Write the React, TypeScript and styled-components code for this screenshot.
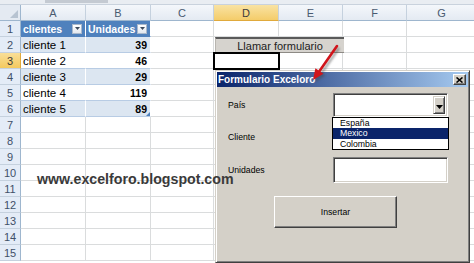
import styled, { createGlobalStyle } from "styled-components";

const GlobalStyle = createGlobalStyle`
  html, body {
    margin: 0;
    padding: 0;
    background: #ffffff;
  }
  body {
    font-family: "Liberation Sans", Arial, sans-serif;
  }
`;

const COLUMNS = ["A", "B", "C", "D", "E", "F", "G"];
const ROW_COUNT = 15;

const clients = [
  { name: "cliente 1", units: 39 },
  { name: "cliente 2", units: 46 },
  { name: "cliente 3", units: 29 },
  { name: "cliente 4", units: 119 },
  { name: "cliente 5", units: 89 },
];

const countries = ["España", "Mexico", "Colombia"];

const SELECTED_ROW = 3;
const SELECTED_COL = 3;

const FilterArrow = () => (
  <FilterButton>
    <svg width="5" height="3" viewBox="0 0 5 3">
      <path d="M0 0 H5 L2.5 3 Z" fill="#3c4a5c" />
    </svg>
  </FilterButton>
);

const DownArrow = () => (
  <svg width="7" height="4" viewBox="0 0 7 4">
    <path d="M0 0 H7 L3.5 4 Z" fill="#000" />
  </svg>
);

const App = () => {
  const renderCell = (row: number, col: number) => {
    const selected = row === SELECTED_ROW && col === SELECTED_COL;
    if (row === 1 && col < 2) {
      return (
        <Cell key={col} $tone="head">
          <HeadLabel>{col === 0 ? "clientes" : "Unidades"}</HeadLabel>
          <FilterArrow />
        </Cell>
      );
    }
    if (row >= 2 && row <= 6 && col < 2) {
      const item = clients[row - 2];
      const tone = row % 2 === 0 ? "band" : "row";
      return col === 0 ? (
        <Cell key={col} $tone={tone}>
          {item.name}
        </Cell>
      ) : (
        <Cell key={col} $tone={tone} $numeric $handle={row === 6}>
          {item.units}
        </Cell>
      );
    }
    return <Cell key={col} $selected={selected} />;
  };

  return (
    <>
      <GlobalStyle />
      <Screen>
        <TopStrip>
          <StripTab />
        </TopStrip>
        <Sheet>
          <Corner />
          {COLUMNS.map((c, i) => (
            <ColHead key={c} $active={i === SELECTED_COL}>
              {c}
            </ColHead>
          ))}
          {Array.from({ length: ROW_COUNT }, (_, r) => {
            const row = r + 1;
            return [
              <RowHead key={`h${row}`} $active={row === SELECTED_ROW}>
                {row}
              </RowHead>,
              ...COLUMNS.map((_, col) => (
                <RowCellSlot key={`${row}-${col}`}>{renderCell(row, col)}</RowCellSlot>
              )),
            ];
          })}
        </Sheet>

        <SheetButton>Llamar formulario</SheetButton>

        <Dialog>
          <TitleBar>
            <TitleText>Formulario Exceloro</TitleText>
            <CloseButton>
              <svg width="7" height="6" viewBox="0 0 7 6">
                <path d="M0.5 0.5 L6.5 5.5 M6.5 0.5 L0.5 5.5" stroke="#000" strokeWidth="1.6" />
              </svg>
            </CloseButton>
          </TitleBar>
          <FormBody>
            <FieldGrid>
              <FieldLabel>País</FieldLabel>
              <Combo>
                <ComboText />
                <DropButton>
                  <DownArrow />
                </DropButton>
                <DropList>
                  {countries.map((c) => (
                    <ListItem key={c} $active={c === "Mexico"}>
                      {c}
                    </ListItem>
                  ))}
                </DropList>
              </Combo>
              <FieldLabel>Cliente</FieldLabel>
              <Combo>
                <ComboText />
              </Combo>
              <FieldLabel>Unidades</FieldLabel>
              <TextBox />
            </FieldGrid>
            <ActionButton>Insertar</ActionButton>
          </FormBody>
        </Dialog>

        <Watermark>www.excelforo.blogspot.com</Watermark>

        <Pointer width="50" height="50" viewBox="0 0 50 50">
          <defs>
            <filter id="soft" x="-20%" y="-20%" width="140%" height="140%">
              <feGaussianBlur stdDeviation="1" />
            </filter>
          </defs>
          <g transform="translate(2 2)" filter="url(#soft)" opacity="0.45">
            <line x1="37" y1="6" x2="19.5" y2="31" stroke="#444" strokeWidth="2.6" />
            <polygon points="13,40 23.4,33.8 15.4,28.2" fill="#444" />
          </g>
          <line x1="37" y1="6" x2="19.5" y2="31" stroke="#d0141b" strokeWidth="2.6" strokeLinecap="round" />
          <polygon points="13,40 23.4,33.8 15.4,28.2" fill="#d0141b" />
        </Pointer>
      </Screen>
    </>
  );
};

const Screen = styled.div`
  position: relative;
  width: 474px;
  height: 263px;
  overflow: hidden;
  background: #ffffff;
`;

const TopStrip = styled.div`
  height: 5px;
  background: #e9edf2;
  border-bottom: 1px solid #c9d2dd;
  box-sizing: border-box;
  padding-left: 45px;
`;

const StripTab = styled.div`
  width: 63px;
  height: 3px;
  background: #c4cad2;
`;

const Sheet = styled.div`
  display: grid;
  grid-template-columns: 21px 65px 65px 63px 65px 64px 64px 70px;
  grid-template-rows: 16px;
  grid-auto-rows: 16px;
  font-size: 11.5px;
  color: #000;
`;

const RowCellSlot = styled.div`
  display: contents;
`;

const Corner = styled.div`
  position: relative;
  background: #e4eaf2;
  border-right: 1px solid #9eb6ce;
  border-bottom: 1px solid #9eb6ce;
  box-sizing: border-box;
  &::after {
    content: "";
    position: absolute;
    right: 2px;
    bottom: 2px;
    border-left: 8px solid transparent;
    border-bottom: 8px solid #b7c3d1;
  }
`;

const ColHead = styled.div<{ $active?: boolean }>`
  display: flex;
  align-items: center;
  justify-content: center;
  box-sizing: border-box;
  font-size: 11px;
  color: ${(p) => (p.$active ? "#3b3b3b" : "#4a5a70")};
  background: ${(p) =>
    p.$active
      ? "linear-gradient(#f9e3a3, #f4cc6a)"
      : "linear-gradient(#f4f7fb, #e4eaf2)"};
  border-right: 1px solid #c5d1de;
  border-bottom: 1px solid ${(p) => (p.$active ? "#e0a93b" : "#9eb6ce")};
`;

const RowHead = styled.div<{ $active?: boolean }>`
  display: flex;
  align-items: center;
  justify-content: center;
  box-sizing: border-box;
  font-size: 11px;
  color: ${(p) => (p.$active ? "#3b3b3b" : "#3f5068")};
  background: ${(p) => (p.$active ? "linear-gradient(#f9df98, #f4c95f)" : "#e4ecf7")};
  border-right: 1px solid ${(p) => (p.$active ? "#e0a93b" : "#9eb6ce")};
  border-bottom: 1px solid #c5d1de;
`;

const Cell = styled.div<{
  $tone?: "head" | "band" | "row";
  $numeric?: boolean;
  $selected?: boolean;
  $handle?: boolean;
}>`
  position: relative;
  display: flex;
  align-items: center;
  justify-content: ${(p) => (p.$numeric ? "flex-end" : "space-between")};
  box-sizing: border-box;
  padding: 0 3px 0 2px;
  white-space: nowrap;
  overflow: visible;
  font-weight: ${(p) => (p.$numeric ? 700 : 400)};
  font-size: ${(p) => (p.$numeric ? "10.5px" : "11.5px")};
  background: ${(p) =>
    p.$tone === "head" ? "#4f81bd" : p.$tone === "band" ? "#dce6f1" : "#ffffff"};
  border-right: 1px solid ${(p) => (p.$tone ? "#ffffff" : "#dadcdd")};
  border-bottom: 1px solid
    ${(p) => (p.$tone === "head" ? "#4f81bd" : p.$tone ? "#b8cce4" : "#dadcdd")};
  ${(p) =>
    p.$selected &&
    `
    z-index: 1;
    outline: 2px solid #000;
    outline-offset: -1px;
  `}
  ${(p) =>
    p.$handle &&
    `
    &::after {
      content: "";
      position: absolute;
      right: 0;
      bottom: 0;
      border-left: 4px solid transparent;
      border-bottom: 4px solid #4f81bd;
    }
  `}
`;

const HeadLabel = styled.span`
  color: #ffffff;
  font-weight: 700;
  font-size: 10.5px;
`;

const FilterButton = styled.span`
  display: flex;
  align-items: center;
  justify-content: center;
  width: 10px;
  height: 10px;
  box-sizing: border-box;
  background: linear-gradient(#ffffff, #e3e8ef);
  border: 1px solid #a9b8cb;
  margin-left: 2px;
`;

const SheetButton = styled.div`
  position: absolute;
  left: 215px;
  top: 37px;
  width: 129px;
  height: 16px;
  box-sizing: border-box;
  display: flex;
  align-items: center;
  justify-content: center;
  background: #d6d3ce;
  border-top: 2px solid #5a5a5a;
  border-left: 1px solid #b8b5af;
  border-bottom: 1px solid #8d8a85;
  font-size: 11px;
  color: #222;
`;

const Watermark = styled.div`
  position: absolute;
  left: 37px;
  top: 171px;
  font-size: 14.2px;
  line-height: 16px;
  font-weight: 700;
  color: #3a3a3a;
  white-space: nowrap;
`;

const Dialog = styled.div`
  position: absolute;
  left: 215px;
  top: 70px;
  width: 255px;
  height: 193px;
  box-sizing: border-box;
  display: flex;
  flex-direction: column;
  padding: 1px;
  background: #d4d0c8;
  border: 1px solid;
  border-color: #d4d0c8 #404040 #404040 #d4d0c8;
  box-shadow: inset 1px 1px #ffffff, inset -1px -1px #808080;
  font-size: 8.7px;
  color: #000;
`;

const TitleBar = styled.div`
  height: 15px;
  display: flex;
  align-items: center;
  justify-content: space-between;
  padding: 0 2px 0 1px;
  background: linear-gradient(to right, #0a246a, #a6caf0);
`;

const TitleText = styled.span`
  color: #ffffff;
  font-weight: 700;
  font-size: 10px;
  white-space: nowrap;
`;

const CloseButton = styled.span`
  display: flex;
  align-items: center;
  justify-content: center;
  width: 13px;
  height: 11px;
  box-sizing: border-box;
  background: #d4d0c8;
  border: 1px solid;
  border-color: #ffffff #404040 #404040 #ffffff;
  box-shadow: inset -1px -1px #808080;
`;

const FormBody = styled.div`
  flex: 1;
  display: flex;
  flex-direction: column;
  padding: 6px 0 0 11px;
`;

const FieldGrid = styled.div`
  display: grid;
  grid-template-columns: 105px 115px;
  grid-template-rows: 24px 24px 26px;
  row-gap: 8px;
`;

const FieldLabel = styled.span`
  align-self: center;
`;

const sunken = `
  box-sizing: border-box;
  background: #ffffff;
  border: 1px solid;
  border-color: #808080 #ffffff #ffffff #808080;
  box-shadow: inset 1px 1px #404040, inset -1px -1px #d4d0c8;
`;

const Combo = styled.div`
  position: relative;
  display: flex;
  align-items: stretch;
  padding: 2px;
  ${sunken}
`;

const ComboText = styled.div`
  flex: 1;
`;

const DropButton = styled.div`
  width: 12px;
  display: flex;
  align-items: flex-end;
  justify-content: center;
  padding-bottom: 4px;
  box-sizing: border-box;
  background: #d4d0c8;
  border: 1px solid;
  border-color: #d4d0c8 #404040 #404040 #d4d0c8;
  box-shadow: inset 1px 1px #ffffff, inset -1px -1px #808080;
`;

const DropList = styled.div`
  position: absolute;
  z-index: 2;
  left: -2px;
  right: -2px;
  top: calc(100% + 1px);
  display: flex;
  flex-direction: column;
  background: #ffffff;
  border: 1px solid #000;
`;

const ListItem = styled.div<{ $active?: boolean }>`
  height: 10.4px;
  line-height: 10.4px;
  padding-left: 7px;
  background: ${(p) => (p.$active ? "#0a246a" : "transparent")};
  color: ${(p) => (p.$active ? "#ffffff" : "#000")};
`;

const TextBox = styled.div`
  ${sunken}
`;

const ActionButton = styled.div`
  width: 123px;
  height: 32px;
  margin: 13px 0 0 46px;
  box-sizing: border-box;
  display: flex;
  align-items: center;
  justify-content: center;
  background: #d4d0c8;
  border: 1px solid;
  border-color: #ffffff #404040 #404040 #ffffff;
  box-shadow: inset -1px -1px #808080;
`;

const Pointer = styled.svg`
  position: absolute;
  left: 300px;
  top: 40px;
  overflow: visible;
  pointer-events: none;
`;

export default App;
